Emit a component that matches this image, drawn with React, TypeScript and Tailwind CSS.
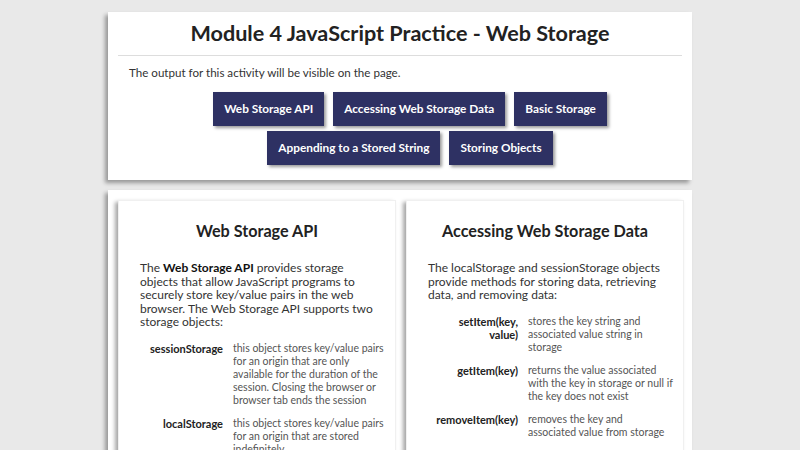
import React from 'react';

type Entry = { term: React.ReactNode; desc: string };

const buttons = [
  'Web Storage API',
  'Accessing Web Storage Data',
  'Basic Storage',
  'Appending to a Stored String',
  'Storing Objects',
];

const storageObjects: Entry[] = [
  {
    term: 'sessionStorage',
    desc: 'this object stores key/value pairs for an origin that are only available for the duration of the session. Closing the browser or browser tab ends the session',
  },
  {
    term: 'localStorage',
    desc: 'this object stores key/value pairs for an origin that are stored indefinitely',
  },
];

const storageMethods: Entry[] = [
  { term: 'setItem(key, value)', desc: 'stores the key string and associated value string in storage' },
  { term: 'getItem(key)', desc: 'returns the value associated with the key in storage or null if the key does not exist' },
  { term: 'removeItem(key)', desc: 'removes the key and associated value from storage' },
  { term: 'clear()', desc: 'removes all keys and values from storage' },
];

const DefList: React.FC<{ items: Entry[]; cols: string }> = ({ items, cols }) => (
  <dl className={`mt-[13px] grid ${cols} gap-x-[10px] gap-y-[9.5px] leading-[13.2px]`}>
    {items.map((item, i) => (
      <React.Fragment key={i}>
        <dt className="text-right text-[11px] font-bold text-[#222]">{item.term}</dt>
        <dd className="text-[10.5px] text-[#555]">{item.desc}</dd>
      </React.Fragment>
    ))}
  </dl>
);

const Panel: React.FC<{ title: string; children: React.ReactNode }> = ({ title, children }) => (
  <section className="bg-white border border-[#f0f0f0] shadow-[-3px_2px_4px_rgba(0,0,0,0.35)] pt-[19px] pl-[21px] pr-[6px] pb-[20px]">
    <h2 className="text-center text-[16.2px] leading-[22px] font-bold text-[#222] pr-[15px]">{title}</h2>
    {children}
  </section>
);

export default function App() {
  return (
    <div className="min-h-screen bg-[#e9e9e9] pt-[12px] font-[Lato,sans-serif]">
      <div className="mx-auto w-[584px] flex flex-col gap-[10px]">
        {/* Page header with nav buttons */}
        <header className="bg-white shadow-[-3px_3px_4px_rgba(0,0,0,0.35)] px-[10px] pt-[7px] pb-[15px]">
          <h1 className="text-center text-[21.6px] leading-[28px] font-bold text-[#222]">
            Module 4 JavaScript Practice - Web Storage
          </h1>
          <hr className="mt-[8px] border-[#ddd]" />
          <p className="mt-[9px] pl-[11px] text-[11.6px] leading-[16px] text-[#333]">
            The output for this activity will be visible on the page.
          </p>
          <nav className="mt-[11px] pl-[20px] flex flex-wrap justify-center gap-x-[9px] gap-y-[5px]">
            {buttons.map((b) => (
              <button
                key={b}
                className="h-[34px] px-[11px] bg-[#2e3163] text-white text-[11.8px] font-bold shadow-[2px_2px_3px_rgba(0,0,0,0.4)]"
              >
                {b}
              </button>
            ))}
          </nav>
        </header>

        {/* Content sections */}
        <main className="bg-white shadow-[-3px_3px_4px_rgba(0,0,0,0.35)] pl-[10px] pr-[8px] pt-[10px] pb-[10px] grid grid-cols-2 gap-[10px]">
          <Panel title="Web Storage API">
            <p className="mt-[19px] mr-[14px] text-[12px] leading-[13.5px] text-[#333]">
              The <b className="text-[#111]">Web Storage API</b> provides storage objects that allow JavaScript programs
              to securely store key/value pairs in the web browser. The Web Storage API supports two storage objects:
            </p>
            <DefList items={storageObjects} cols="grid-cols-[83px_1fr]" />
          </Panel>
          <Panel title="Accessing Web Storage Data">
            <p className="mt-[19px] mr-[14px] text-[12px] leading-[13.5px] text-[#333]">
              The localStorage and sessionStorage objects provide methods for storing data, retrieving data, and
              removing data:
            </p>
            <DefList items={storageMethods} cols="grid-cols-[90px_145px]" />
          </Panel>
        </main>
      </div>
    </div>
  );
}
